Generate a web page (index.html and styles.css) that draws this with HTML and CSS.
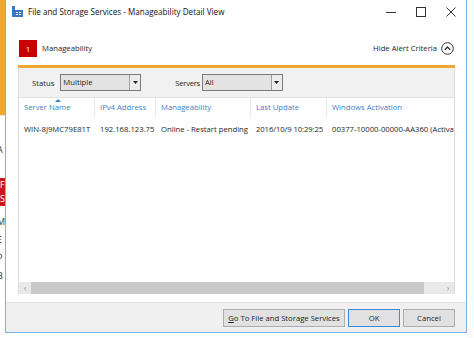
FILE: index.html
```html
<!DOCTYPE html>
<html lang="en">
<head>
    <meta charset="UTF-8">
    <title>Manageability Detail View</title>
    <link rel="stylesheet" href="styles.css">
</head>
<body>
    <div class="desk">
        <div class="behind">
            <div class="behind-top"></div>
            <div class="behind-letters">
                <span class="first">A</span>
                <span class="red">F</span>
                <span class="red">S</span>
                <span class="after-red">M</span>
                <span>E</span>
                <span>P</span>
                <span>B</span>
            </div>
        </div>

        <div class="window">
            <div class="titlebar">
                <svg class="app-icon" width="11" height="11" viewBox="0 0 11 11">
                    <rect x="0" y="0" width="3" height="11" fill="#3a78c2"/>
                    <rect x="3" y="4" width="8" height="7" fill="#3a78c2"/>
                    <rect x="4" y="6" width="2" height="1" fill="#fff"/>
                    <rect x="4" y="8" width="2" height="1" fill="#fff"/>
                    <rect x="7" y="6" width="2" height="1" fill="#fff"/>
                    <rect x="7" y="8" width="2" height="1" fill="#fff"/>
                </svg>
                <span class="title">File and Storage Services - Manageability Detail View</span>
                <div class="controls">
                    <span class="ctl"><svg width="10" height="10" viewBox="0 0 10 10"><line x1="0" y1="5.5" x2="10" y2="5.5" stroke="#333" stroke-width="1"/></svg></span>
                    <span class="ctl"><svg width="10" height="10" viewBox="0 0 10 10"><rect x="0.5" y="0.5" width="9" height="9" fill="none" stroke="#333" stroke-width="1"/></svg></span>
                    <span class="ctl"><svg width="10" height="10" viewBox="0 0 10 10"><path d="M0.5 0.5 L9.5 9.5 M9.5 0.5 L0.5 9.5" stroke="#333" stroke-width="1"/></svg></span>
                </div>
            </div>

            <div class="content">
                <div class="alert-row">
                    <span class="badge">1</span>
                    <span class="alert-name">Manageability</span>
                    <span class="hide-link">Hide Alert Criteria</span>
                    <svg class="chev" width="13" height="13" viewBox="0 0 13 13">
                        <circle cx="6.5" cy="6.5" r="5.8" fill="none" stroke="#333" stroke-width="1"/>
                        <path d="M3.8 7.8 L6.5 5 L9.2 7.8" fill="none" stroke="#333" stroke-width="1.4"/>
                    </svg>
                </div>

                <div class="panel">
                    <div class="filters">
                        <span class="flabel">Status</span>
                        <div class="combo">
                            <span class="combo-val">Multiple</span>
                            <span class="combo-btn"><svg width="5" height="3" viewBox="0 0 5 3"><path d="M0 0 H5 L2.5 3 Z" fill="#222"/></svg></span>
                        </div>
                        <span class="flabel servers">Servers</span>
                        <div class="combo">
                            <span class="combo-val">All</span>
                            <span class="combo-btn"><svg width="5" height="3" viewBox="0 0 5 3"><path d="M0 0 H5 L2.5 3 Z" fill="#222"/></svg></span>
                        </div>
                    </div>

                    <div class="grid">
                        <div class="row head">
                            <span class="c1 sorted">Server Name</span>
                            <span class="c2">IPv4 Address</span>
                            <span class="c3">Manageability</span>
                            <span class="c4">Last Update</span>
                            <span class="c5">Windows Activation</span>
                        </div>
                        <div class="row data">
                            <span class="c1">WIN-8J9MC79E81T</span>
                            <span class="c2">192.168.123.75</span>
                            <span class="c3">Online - Restart pending</span>
                            <span class="c4">2016/10/9 10:29:25</span>
                            <span class="c5">00377-10000-00000-AA360 (Activated)</span>
                        </div>
                    </div>

                    <div class="hscroll">
                        <span class="arrow">&lsaquo;</span>
                        <span class="thumb"></span>
                        <span class="arrow">&rsaquo;</span>
                    </div>
                </div>
            </div>

            <div class="footer">
                <button class="btn wide"><u>G</u>o To File and Storage Services</button>
                <button class="btn ok">OK</button>
                <button class="btn">Cancel</button>
            </div>
        </div>

        <div class="behind-right"></div>
    </div>
</body>
</html>
```

FILE: styles.css
```css
html, body {
    margin: 0;
    padding: 0;
}

body {
    width: 474px;
    height: 338px;
    overflow: hidden;
    background: #ffffff;
    font-family: "Open Sans", "Noto Sans", sans-serif;
    font-size: 7.7px;
    color: #262626;
}

.desk {
    display: flex;
    height: 338px;
}

/* what shows of the server manager behind the dialog */
.behind {
    width: 5px;
    flex: none;
    overflow: hidden;
    display: flex;
    flex-direction: column;
}

.behind-top {
    height: 115px;
    background: #f0a830;
    border-bottom: 1px solid #e6e6e6;
}

.behind-letters {
    display: flex;
    flex-direction: column;
    padding-top: 25px;
    font-size: 9px;
    line-height: 18px;
    color: #333;
}

.behind-letters span {
    margin-left: -3px;
}

.behind-letters .first {
    margin-bottom: 19px;
}

.behind-letters .red {
    background: #c81818;
    color: #fff;
    margin-left: 0;
    line-height: 14px;
}

.behind-letters .after-red {
    margin-top: 7px;
}

.behind-right {
    flex: 1;
    background: #fbfbfb;
}

.window {
    width: 460px;
    flex: none;
    height: 332px;
    border: 1px solid #7fb2e4;
    border-top: none;
    background: #ffffff;
    display: flex;
    flex-direction: column;
}

.titlebar {
    height: 23px;
    display: flex;
    align-items: center;
    padding-left: 6px;
}

.app-icon {
    margin-right: 5px;
}

.title {
    font-size: 8.1px;
    color: #111;
}

.controls {
    margin-left: auto;
    display: flex;
}

.ctl {
    width: 30px;
    height: 23px;
    display: flex;
    align-items: center;
    justify-content: center;
}

.content {
    flex: 1;
    padding: 16px 11px 0 12px;
    display: flex;
    flex-direction: column;
}

.alert-row {
    display: flex;
    align-items: center;
    height: 18px;
}

.badge {
    width: 18px;
    height: 17px;
    margin-left: 1px;
    background: #c80000;
    color: #fff;
    display: flex;
    align-items: center;
    justify-content: center;
    font-size: 8px;
}

.alert-name {
    margin-left: 5px;
}

.hide-link {
    margin-left: auto;
    margin-right: 4px;
}

.chev {
    margin-right: 1px;
}

.panel {
    margin-top: 8px;
    height: 226px;
    border-top: 3px solid #f0a830;
    display: flex;
    flex-direction: column;
}

.filters {
    height: 29px;
    background: #f1f1f1;
    border-left: 1px solid #dcdcdc;
    border-right: 1px solid #dcdcdc;
    border-bottom: 1px solid #e0e0e0;
    display: flex;
    align-items: center;
    padding-left: 13px;
}

.flabel {
    margin-right: 6px;
}

.flabel.servers {
    margin-left: 34px;
    margin-right: 2px;
    letter-spacing: -0.3px;
}

.combo {
    width: 79px;
    height: 15px;
    border: 1px solid #7a7a7a;
    background: #e3e3e3;
    display: flex;
}

.combo-val {
    flex: 1;
    padding-left: 2px;
    line-height: 15px;
}

.combo-btn {
    width: 10px;
    border-left: 1px solid #a0a0a0;
    background: #ececec;
    display: flex;
    align-items: center;
    justify-content: center;
}

.grid {
    flex: 1;
    border-left: 1px solid #dcdcdc;
    border-right: 1px solid #dcdcdc;
    background: #fff;
}

.row {
    display: flex;
    white-space: nowrap;
    overflow: hidden;
}

.row span {
    flex: none;
    padding-left: 5px;
    box-sizing: border-box;
}

.row .c1 { width: 76px; }
.row .c2 { width: 61px; }
.row .c3 { width: 95px; }
.row .c4 { width: 76px; }
.row .c5 { width: 140px; }

.data .c4 {
    letter-spacing: -0.1px;
}

.head {
    height: 19px;
    line-height: 19px;
    color: #3c7fc4;
}

.head span {
    border-right: 1px solid #e8e8e8;
}

.head .c5 {
    border-right: none;
}

.head .sorted {
    position: relative;
}

.head .sorted::before {
    content: "";
    position: absolute;
    left: 36px;
    top: 1px;
    border-left: 3px solid transparent;
    border-right: 3px solid transparent;
    border-bottom: 3px solid #3c7fc4;
}

.data {
    height: 24px;
    line-height: 24px;
}

.hscroll {
    height: 12px;
    background: #e9e9e9;
    border-left: 1px solid #dcdcdc;
    border-right: 1px solid #dcdcdc;
    display: flex;
    align-items: center;
}

.arrow {
    width: 12px;
    text-align: center;
    color: #9a9a9a;
    font-size: 9px;
    line-height: 12px;
}

.thumb {
    flex: 1;
    height: 12px;
    background: #c9c9c9;
    margin-right: 18px;
}

.footer {
    margin-top: 8px;
    height: 31px;
    background: #f0f0f0;
    border-top: 1px solid #dfdfdf;
    display: flex;
    align-items: center;
    justify-content: flex-end;
    padding-right: 11px;
    gap: 3px;
}

.btn {
    height: 18px;
    border: 1px solid #adadad;
    background: #e1e1e1;
    font-family: "Open Sans", "Noto Sans", sans-serif;
    font-size: 7.7px;
    color: #222;
    padding: 0;
    width: 52px;
}

.btn.wide {
    width: 122px;
}

.btn.ok {
    border-color: #3c8ad8;
}
```
